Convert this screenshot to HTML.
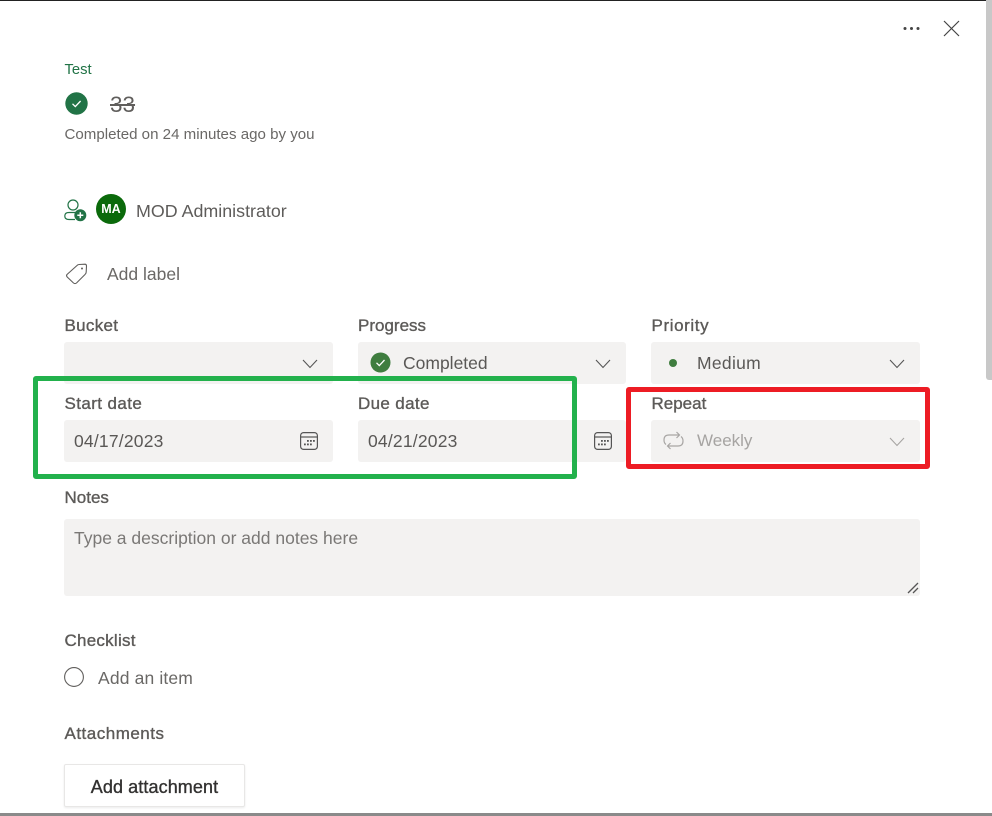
<!DOCTYPE html>
<html>
<head>
<meta charset="utf-8">
<style>
html,body{margin:0;padding:0;background:#fff;}
body{width:992px;height:816px;position:relative;overflow:hidden;font-family:"Liberation Sans",sans-serif;color:#605e5c;}
.t{position:absolute;white-space:nowrap;line-height:20px;}
.l{font-size:17px;font-weight:400;color:#5c5a58;-webkit-text-stroke:.35px #5c5a58;}
.v{font-size:17.5px;color:#5a5856;}
.b{position:absolute;background:#f3f2f1;border-radius:3px;}
svg{position:absolute;overflow:visible;}
</style>
</head>
<body>
<div style="position:absolute;left:0;top:0;width:992px;height:1px;background:#222"></div>
<div style="position:absolute;left:986px;top:0;width:6px;height:380px;background:#c8c8c8;border-radius:0 0 0 3px"></div>
<div style="position:absolute;left:0;top:813px;width:992px;height:3px;background:#8a8a8a"></div>

<svg style="left:902px;top:22px" width="20" height="14"><circle cx="3" cy="6.5" r="1.5" fill="#444"/><circle cx="9.5" cy="6.5" r="1.5" fill="#444"/><circle cx="16" cy="6.5" r="1.5" fill="#444"/></svg>
<svg style="left:943px;top:20px" width="17" height="17"><path d="M1 1L16 16M16 1L1 16" stroke="#444" stroke-width="1.2" fill="none"/></svg>

<div class="t" style="left:64.5px;top:60px;font-size:14.8px;color:#217346">Test</div>
<svg style="left:65px;top:92px" width="23" height="23"><circle cx="11.5" cy="11.5" r="11.2" fill="#217346"/><path d="M7.5 11.8L10.3 14.6L15.6 9" stroke="#fff" stroke-width="1.3" fill="none"/></svg>
<div class="t" style="left:110px;top:94px;font-size:22.5px;line-height:22px;color:#605e5c;text-decoration:line-through;text-decoration-thickness:1.5px">33</div>
<div class="t" style="left:64.5px;top:125px;font-size:15.1px;color:#6a6866">Completed on 24 minutes ago by you</div>

<svg style="left:64px;top:198px" width="23" height="24" fill="none" stroke="#217346" stroke-width="1.2"><circle cx="9" cy="7" r="5"/><path d="M12 14.5H5Q.8 14.5.8 18Q.8 21.500 5 21.500H11"/><circle cx="16.300" cy="17.300" r="6" fill="#217346" stroke="none"/><path d="M13.300 17.300H19.300M16.300 14.300V20.300" stroke="#fff" stroke-width="1.500"/></svg>
<div style="position:absolute;left:96px;top:194px;width:30px;height:30px;border-radius:50%;background:#0b6a0b;color:#fff;font-size:12.5px;font-weight:700;line-height:30px;text-align:center">MA</div>
<div class="t" style="left:136px;top:201px;font-size:17.85px;color:#5e5c5a">MOD Administrator</div>

<svg style="left:66px;top:263px" width="22" height="22" fill="none" stroke="#605e5c" stroke-width="1.1"><path d="M1 11.5L11 2.5Q12 1.500 13 1.500L19 1.200Q20.500 1.200 20.500 3L20.200 9Q20.200 10.500 19 11.500L10.500 20Q9 21.200 7.500 20L1.200 14Q0 12.700 1 11.500Z"/><circle cx="16" cy="5.500" r="1" fill="#605e5c" stroke="none"/></svg>
<div class="t" style="left:107px;top:264px;font-size:17.5px;color:#6a6866">Add label</div>

<div class="t l" style="left:64.5px;top:316px;letter-spacing:.3px">Bucket</div>
<div class="t l" style="left:358px;top:316px">Progress</div>
<div class="t l" style="left:651.5px;top:316px;letter-spacing:.6px">Priority</div>

<div class="b" style="left:64px;top:342px;width:269px;height:42px"></div>
<div class="b" style="left:358px;top:342px;width:268px;height:42px"></div>
<div class="b" style="left:651px;top:342px;width:269px;height:42px"></div>
<svg style="left:302px;top:359px" width="16" height="10"><path d="M1 1L8 8.500L15 1" stroke="#555" stroke-width="1.100" fill="none"/></svg>
<svg style="left:595px;top:359px" width="16" height="10"><path d="M1 1L8 8.500L15 1" stroke="#555" stroke-width="1.100" fill="none"/></svg>
<svg style="left:889px;top:359px" width="16" height="10"><path d="M1 1L8 8.500L15 1" stroke="#555" stroke-width="1.100" fill="none"/></svg>

<svg style="left:370px;top:352px" width="21" height="21"><circle cx="10.500" cy="10.500" r="10" fill="#3f7d3f"/><path d="M6.500 10.800L9.300 13.600L14.500 8" stroke="#fff" stroke-width="1.300" fill="none"/></svg>
<div class="t v" style="left:403px;top:353px">Completed</div>
<div style="position:absolute;left:669px;top:359px;width:8px;height:8px;border-radius:50%;background:#3f7d3f"></div>
<div class="t v" style="left:697px;top:353px;letter-spacing:.3px">Medium</div>

<div class="t l" style="left:64.5px;top:394px;letter-spacing:.4px">Start date</div>
<div class="t l" style="left:358px;top:394px;letter-spacing:.35px">Due date</div>
<div class="t l" style="left:651.5px;top:394px">Repeat</div>

<div class="b" style="left:64px;top:420px;width:269px;height:42px"></div>
<div class="b" style="left:358px;top:420px;width:268px;height:42px"></div>
<div class="b" style="left:651px;top:420px;width:269px;height:42px"></div>
<div class="t v" style="left:74px;top:431px;letter-spacing:.2px">04/17/2023</div>
<div class="t v" style="left:368px;top:431px;letter-spacing:.2px">04/21/2023</div>

<svg style="left:300px;top:432px" width="18" height="18" fill="none" stroke="#555" stroke-width="1.200"><rect x=".6" y=".6" width="16.800" height="16.800" rx="3"/><path d="M1 5H17"/><g fill="#555" stroke="none"><rect x="7" y="8" width="1.800" height="1.800"/><rect x="10" y="8" width="1.800" height="1.800"/><rect x="13" y="8" width="1.800" height="1.800"/><rect x="4" y="11.500" width="1.800" height="1.800"/><rect x="7" y="11.500" width="1.800" height="1.800"/><rect x="10" y="11.500" width="1.800" height="1.800"/></g></svg>
<svg style="left:594px;top:432px" width="18" height="18" fill="none" stroke="#555" stroke-width="1.200"><rect x=".6" y=".6" width="16.800" height="16.800" rx="3"/><path d="M1 5H17"/><g fill="#555" stroke="none"><rect x="7" y="8" width="1.800" height="1.800"/><rect x="10" y="8" width="1.800" height="1.800"/><rect x="13" y="8" width="1.800" height="1.800"/><rect x="4" y="11.500" width="1.800" height="1.800"/><rect x="7" y="11.500" width="1.800" height="1.800"/><rect x="10" y="11.500" width="1.800" height="1.800"/></g></svg>

<svg style="left:663px;top:431px" width="21" height="19" fill="none" stroke="#a8a6a4" stroke-width="1.200"><path d="M13.500 1L16.500 4L13.500 7M16 4H6Q1 4 1 9Q1 12 3 13.500"/><path d="M7.500 18L4.500 15L7.500 12M5 15H15Q20 15 20 10Q20 7 18 5.500"/></svg>
<div class="t" style="left:697px;top:431px;font-size:17px;color:#a6a4a2">Weekly</div>
<svg style="left:889px;top:437px" width="16" height="10"><path d="M1 1L8 8.500L15 1" stroke="#a6a4a2" stroke-width="1.100" fill="none"/></svg>

<div style="position:absolute;left:33px;top:376px;width:534px;height:92px;border:5.5px solid #22b14c;border-radius:3px;box-sizing:content-box;padding-bottom:1px"></div>
<div style="position:absolute;left:625.500px;top:387px;width:294px;height:72px;border:5.5px solid #ed1c24;border-radius:3px"></div>

<div class="t l" style="left:64.5px;top:488px">Notes</div>
<div class="b" style="left:64px;top:519px;width:856px;height:77px"></div>
<div class="t" style="left:74px;top:528px;font-size:17.5px;color:#7a7876">Type a description or add notes here</div>
<svg style="left:907px;top:582px" width="12" height="12"><path d="M1 11L11 1M6 11L11 6" stroke="#555" stroke-width="1.300" fill="none"/></svg>

<div class="t l" style="left:64.5px;top:631px;letter-spacing:.25px">Checklist</div>
<svg style="left:64px;top:667px" width="20" height="20"><circle cx="10" cy="10" r="9.400" fill="none" stroke="#605e5c" stroke-width="1.100"/></svg>
<div class="t" style="left:98px;top:668px;font-size:17.5px;letter-spacing:.15px;color:#6a6866">Add an item</div>

<div class="t l" style="left:64.5px;top:724px;letter-spacing:.5px">Attachments</div>
<div style="position:absolute;left:64px;top:764px;width:179px;height:41px;border:1px solid #e8e7e6;border-radius:2px;background:#fff;box-shadow:0 1px 2px rgba(0,0,0,.08);font-size:18px;letter-spacing:.1px;line-height:44px;text-align:center;color:#323130;-webkit-text-stroke:.35px #323130">Add attachment</div>
</body>
</html>
